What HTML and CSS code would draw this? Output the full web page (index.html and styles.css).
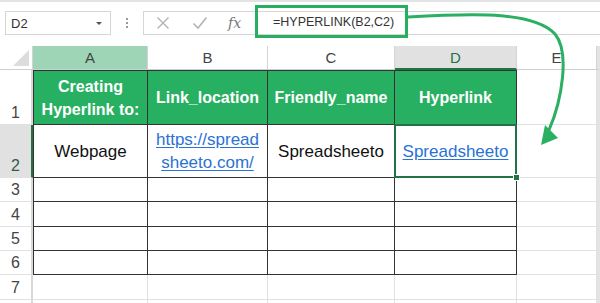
FILE: index.html
```html
<!DOCTYPE html>
<html lang="en">
<head>
    <meta charset="UTF-8">
    <meta name="viewport" content="width=device-width, initial-scale=1.0">
    <title>HYPERLINK</title>
    <link rel="stylesheet" href="styles.css">
</head>
<body>

<div class="app">
    <div class="ribbon-edge"></div>

    <div class="formula-bar">
        <div class="name-box">
            <span>D2</span>
            <span class="caret"></span>
        </div>
        <div class="grip"><i></i><i></i><i></i></div>
        <div class="fx-box">
            <svg width="14" height="14" viewBox="0 0 14 14"><path d="M1.5 1.5 L12.5 12.5 M12.5 1.5 L1.5 12.5" stroke="#b3b3b3" stroke-width="1.4" fill="none"/></svg>
            <svg width="16" height="14" viewBox="0 0 16 14"><path d="M1.5 7.5 L6 12 L14.5 1.5" stroke="#b3b3b3" stroke-width="1.6" fill="none"/></svg>
            <span class="fx">fx</span>
        </div>
        <div class="formula-input">
            <div class="formula-text">=HYPERLINK(B2,C2)</div>
        </div>
    </div>

    <div class="sheet">
        <!-- column headers -->
        <div class="corner"><span></span></div>
        <div class="ch col-a">A</div>
        <div class="ch">B</div>
        <div class="ch">C</div>
        <div class="ch col-sel">D</div>
        <div class="ch">E</div>
        <div class="ch last"></div>

        <!-- row 1 -->
        <div class="rh">1</div>
        <div class="c t a top hd">Creating<br>Hyperlink to:</div>
        <div class="c t top hd">Link_location</div>
        <div class="c t top hd">Friendly_name</div>
        <div class="c t top hd">Hyperlink</div>
        <div class="c"></div>
        <div class="c last"></div>

        <!-- row 2 -->
        <div class="rh row-sel">2</div>
        <div class="c t a">Webpage</div>
        <div class="c t"><span class="link">https://spread<br>sheeto.com/</span></div>
        <div class="c t">Spreadsheeto</div>
        <div class="c t active"><span class="link">Spreadsheeto</span></div>
        <div class="c"></div>
        <div class="c last"></div>

        <!-- rows 3-6 -->
        <div class="rh">3</div>
        <div class="c t a"></div><div class="c t"></div><div class="c t"></div><div class="c t"></div>
        <div class="c"></div><div class="c last"></div>

        <div class="rh">4</div>
        <div class="c t a"></div><div class="c t"></div><div class="c t"></div><div class="c t"></div>
        <div class="c"></div><div class="c last"></div>

        <div class="rh">5</div>
        <div class="c t a"></div><div class="c t"></div><div class="c t"></div><div class="c t"></div>
        <div class="c"></div><div class="c last"></div>

        <div class="rh">6</div>
        <div class="c t a"></div><div class="c t"></div><div class="c t"></div><div class="c t"></div>
        <div class="c"></div><div class="c last"></div>

        <!-- row 7 -->
        <div class="rh">7</div>
        <div class="c"></div><div class="c"></div><div class="c"></div><div class="c"></div>
        <div class="c"></div><div class="c last"></div>

        <!-- row 8, only its top edge shows -->
        <div class="rh"></div>
        <div class="c"></div><div class="c"></div><div class="c"></div><div class="c"></div>
        <div class="c"></div><div class="c last"></div>
    </div>

    <svg class="callout" width="600" height="303" viewBox="0 0 600 303">
        <path d="M408 17 C 480 13, 535 12, 555 34 C 570 52, 562 100, 549 130" stroke="#2bb063" stroke-width="3" fill="none"/>
        <polygon points="541,145 545,125 558,138" fill="#2bb063"/>
    </svg>
</div>

</body>
</html>
```

FILE: styles.css
```css
body {
    margin: 0;
    background: #fff;
    font-family: "Liberation Sans", Arial, sans-serif;
}
.app {
    position: relative;
    width: 600px;
    height: 303px;
    overflow: hidden;
}
.ribbon-edge {
    height: 2px;
    background: #e3e3e3;
}

/* formula bar */
.formula-bar {
    display: flex;
    align-items: stretch;
    height: 24px;
    margin: 9px 0 11px 0;
}
.name-box {
    box-sizing: border-box;
    width: 106px;
    margin-left: 5px;
    border: 1px solid #d6d6d6;
    display: flex;
    align-items: center;
    justify-content: space-between;
    padding: 0 8px 0 5px;
    font-size: 13px;
    color: #333;
}
.caret {
    width: 0;
    height: 0;
    border-left: 3px solid transparent;
    border-right: 3px solid transparent;
    border-top: 3px solid #555;
}
.grip {
    width: 32px;
    display: flex;
    flex-direction: column;
    align-items: center;
    justify-content: center;
    gap: 2px;
}
.grip i {
    width: 2px;
    height: 2px;
    background: #9a9a9a;
}
.fx-box {
    box-sizing: border-box;
    width: 112px;
    border: 1px solid #d6d6d6;
    border-right: none;
    display: flex;
    align-items: center;
    padding-left: 12px;
    gap: 22px;
}
.fx {
    font-family: "DejaVu Serif", "Liberation Serif", serif;
    font-style: italic;
    font-size: 14px;
    color: #777;
    margin-left: -2px;
}
.formula-input {
    flex: 1;
    border-top: 1px solid #d6d6d6;
    border-bottom: 1px solid #d6d6d6;
    display: flex;
}
.formula-text {
    box-sizing: border-box;
    width: 153px;
    height: 33px;
    margin: -7px 0 -4px 0;
    border: 3px solid #27ae5f;
    padding-left: 15px;
    font-size: 12.5px;
    color: #333;
    display: flex;
    align-items: center;
}

/* grid */
.sheet {
    display: grid;
    grid-template-columns: 33px 115px 120px 127px 122px 80px 1fr;
    grid-template-rows: 24px 55px 53px 24px 25px 24px 24px 25px 20px;
}
.sheet > div {
    box-sizing: border-box;
}
.corner {
    border-right: 1px solid #d4d4d4;
    border-bottom: 1px solid #cfcfcf;
    position: relative;
}
.corner span {
    position: absolute;
    right: 3px;
    bottom: 3px;
    width: 0;
    height: 0;
    border-left: 16px solid transparent;
    border-bottom: 16px solid #dcdcdc;
}
.ch {
    display: flex;
    align-items: center;
    justify-content: center;
    font-size: 15px;
    color: #444;
    border-right: 1px solid #d4d4d4;
    border-bottom: 1px solid #cfcfcf;
}
.ch.col-a {
    background: #9fd5b7;
}
.ch.col-sel {
    background: #e1e1e1;
    color: #217346;
    border-bottom: 2px solid #217346;
}
.ch.last {
    border-right: 3px solid #e3e3e3;
}
.rh {
    display: flex;
    align-items: flex-end;
    justify-content: center;
    font-size: 16px;
    line-height: 20px;
    padding-bottom: 1px;
    color: #444;
    border-right: 2px solid #d8d8d8;
    border-bottom: 1px solid #e1e1e1;
}
.rh.row-sel {
    background: #e1e1e1;
    color: #2f5e42;
    border-right: 2px solid #217346;
}
.c {
    border-right: 1px solid #e1e1e1;
    border-bottom: 1px solid #e1e1e1;
    display: flex;
    align-items: center;
    justify-content: center;
    text-align: center;
    font-size: 17px;
    line-height: 23px;
    color: #111;
}
.c.last {
    border-right: 3px solid #e3e3e3;
}
.c.t {
    border-right-color: #333;
    border-bottom-color: #333;
}
.c.a {
    border-left: 1px solid #333;
}
.c.top {
    border-top: 1px solid #333;
}
.c.hd {
    background: #28b062;
    color: #fff;
    font-weight: bold;
    font-size: 16px;
}
.link {
    color: #2a72d4;
    text-decoration: underline;
    text-underline-offset: 2px;
}
.c.active {
    position: relative;
}
.c.active::after {
    content: "";
    position: absolute;
    left: -1px;
    top: -1px;
    right: -1px;
    bottom: -1px;
    border: 2px solid #217346;
}
.c.active::before {
    content: "";
    position: absolute;
    right: -4px;
    bottom: -4px;
    width: 5px;
    height: 5px;
    background: #217346;
    border: 1px solid #fff;
    z-index: 1;
}

.callout {
    position: absolute;
    left: 0;
    top: 0;
    pointer-events: none;
}
```
